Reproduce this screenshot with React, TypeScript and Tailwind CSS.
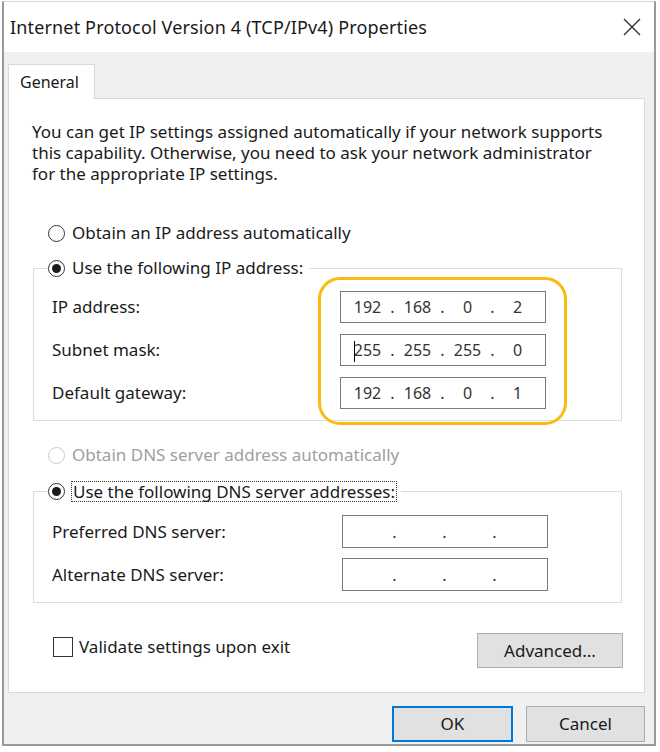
import React from "react";

function Radio({ checked, disabled }: { checked?: boolean; disabled?: boolean }) {
  return (
    <span
      className={
        "flex h-[17px] w-[17px] shrink-0 items-center justify-center rounded-full border bg-white " +
        (disabled ? "border-[#cccccc]" : "border-[#333333]")
      }
    >
      {checked && <span className="h-[9px] w-[9px] rounded-full bg-[#1a1a1a]" />}
    </span>
  );
}

function IpBox({ parts, caret }: { parts: string[]; caret?: boolean }) {
  return (
    <div className="relative flex h-full w-[206px] items-center border border-[#7a7a7a] bg-white px-[4px] text-[16px] text-[#333]">
      {caret && <span className="absolute left-[13px] top-[6px] h-[21px] w-[1px] bg-black" />}
      {parts.map((p, i) => (
        <React.Fragment key={i}>
          <span className="w-[45px] text-center">{p}</span>
          {i < 3 && <span className="w-[5px] text-center">.</span>}
        </React.Fragment>
      ))}
    </div>
  );
}

export default function App() {
  return (
    <div
      className="relative h-[752px] w-[660px] overflow-hidden bg-white text-[#1a1a1a]"
      style={{ fontFamily: '"Noto Sans", "Open Sans", sans-serif' }}
    >
      <div className="ml-[2px] mt-[1px] flex h-[745px] w-[654px] flex-col border-x-2 border-b-2 border-t border-x-[#9a9a9a] border-b-[#9a9a9a] border-t-[#d4d4d4]">
        {/* title bar */}
        <div className="flex h-[50px] items-center justify-between bg-white pl-[6px] pr-[13px]">
          <span className="text-[18px] tracking-[0.15px]">Internet Protocol Version 4 (TCP/IPv4) Properties</span>
          <svg width="18" height="18" viewBox="0 0 18 18">
            <path d="M1 1 L17 17 M17 1 L1 17" stroke="#333" strokeWidth="1.4" />
          </svg>
        </div>

        <div className="flex flex-1 flex-col bg-[#f0f0f0] pl-[4px] pr-[9px] pt-[12px]">
          <div className="relative z-10 -mb-[1px] flex h-[35px] w-[87px] items-center border border-b-0 border-[#d9d9d9] bg-white pl-[11px] text-[16px]">
            General
          </div>

          <div className="flex h-[595px] flex-col border border-[#d9d9d9] bg-white text-[17px]">
            <p className="ml-[23px] mt-[22px] whitespace-nowrap leading-[21px]">
              You can get IP settings assigned automatically if your network supports
              <br />
              this capability. Otherwise, you need to ask your network administrator
              <br />
              for the appropriate IP settings.
            </p>

            <div className="ml-[39px] mt-[38px] flex h-[22px] items-center gap-[7px]">
              <Radio />
              <span>Obtain an IP address automatically</span>
            </div>

            <div className="ml-[24px] mt-[24px] flex h-[153px] w-[589px] flex-col border border-[#dcdcdc]">
              <div className="-mt-[12px] ml-[14px] flex h-[22px] w-fit items-center gap-[7px] bg-white pr-[6px]">
                <Radio checked />
                <span>Use the following IP address:</span>
              </div>
              <div className="mt-[12px] flex flex-col gap-[11px]">
                <div className="flex h-[32px] items-center">
                  <span className="w-[306px] pl-[18px]">IP address:</span>
                  <IpBox parts={["192", "168", "0", "2"]} />
                </div>
                <div className="flex h-[32px] items-center">
                  <span className="w-[306px] pl-[18px]">Subnet mask:</span>
                  <IpBox parts={["255", "255", "255", "0"]} caret />
                </div>
                <div className="flex h-[32px] items-center">
                  <span className="w-[306px] pl-[18px]">Default gateway:</span>
                  <IpBox parts={["192", "168", "0", "1"]} />
                </div>
              </div>
            </div>

            <div className="ml-[39px] mt-[23px] flex h-[22px] items-center gap-[7px] text-[#a0a0a0]">
              <Radio disabled />
              <span>Obtain DNS server address automatically</span>
            </div>

            <div className="ml-[24px] mt-[25px] flex h-[112px] w-[589px] flex-col border border-[#dcdcdc]">
              <div className="-mt-[12px] ml-[14px] flex h-[22px] w-fit items-center gap-[6px] bg-white pr-[4px]">
                <Radio checked />
                <span className="border border-dotted border-[#333] px-[1px] leading-[19px]">
                  Use the following DNS server addresses:
                </span>
              </div>
              <div className="mt-[13px] flex flex-col gap-[10px]">
                <div className="flex h-[33px] items-center">
                  <span className="w-[308px] pl-[18px]">Preferred DNS server:</span>
                  <IpBox parts={["", "", "", ""]} />
                </div>
                <div className="flex h-[33px] items-center">
                  <span className="w-[308px] pl-[18px]">Alternate DNS server:</span>
                  <IpBox parts={["", "", "", ""]} />
                </div>
              </div>
            </div>

            <div className="mt-[30px] flex items-start justify-between pl-[44px] pr-[21px]">
              <div className="mt-[1px] flex items-center gap-[6px]">
                <span className="h-[20px] w-[20px] border border-[#333] bg-white" />
                <span>Validate settings upon exit</span>
              </div>
              <button className="h-[35px] w-[146px] border border-[#adadad] bg-[#e1e1e1] text-[17px]">
                Advanced...
              </button>
            </div>
          </div>

          <div className="mt-[13px] flex justify-end gap-[13px]">
            <button className="h-[36px] w-[121px] border-2 border-[#0078d7] bg-[#e1e1e1] text-[17px]">
              OK
            </button>
            <button className="h-[36px] w-[119px] border border-[#adadad] bg-[#e1e1e1] text-[17px]">
              Cancel
            </button>
          </div>
        </div>
      </div>

      {/* highlight annotation */}
      <div className="absolute left-[318px] top-[277px] h-[148px] w-[249px] rounded-[22px] border-[3px] border-[#fbb912]" />
    </div>
  );
}
